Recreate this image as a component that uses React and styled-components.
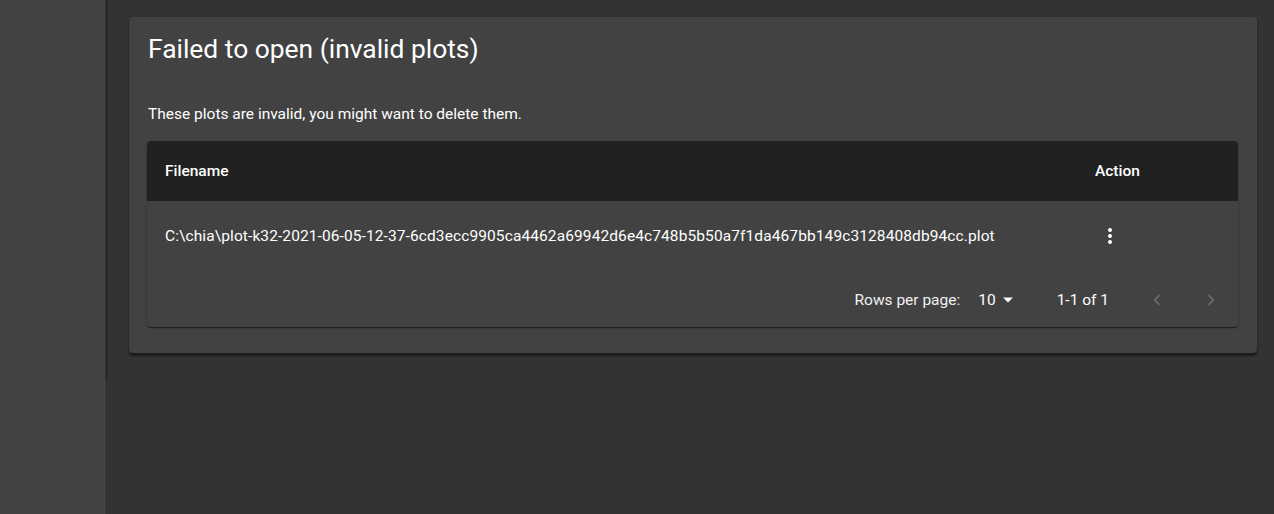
import React from "react";
import styled, { createGlobalStyle } from "styled-components";

const Global = createGlobalStyle`
  html, body, #root { margin: 0; padding: 0; height: 100%; }
  body { background: #333333; font-family: Roboto, "Liberation Sans", Arial, sans-serif; color: #fff; }
  * { box-sizing: border-box; }
`;

const Layout = styled.div`
  display: flex;
  min-height: 100vh;
`;

const Sidebar = styled.aside`
  width: 105px;
  flex: 0 0 105px;
  background: #424242;
  border-right: 1px solid #474747;
`;

const Main = styled.main`
  flex: 1;
  background: #333333;
  display: flex;
  flex-direction: column;
`;

const Content = styled.section`
  height: 378px;
  border-left: 3px solid #2a2a2a;
  padding: 17px 17px 0 21px;
`;

const Card = styled.div`
  background: #424242;
  border-radius: 4px;
  box-shadow: 0 3px 2px rgba(0, 0, 0, 0.4), 0 1px 3px rgba(0, 0, 0, 0.2);
  padding: 15px 19px 26px 18px;
  display: flex;
  flex-direction: column;
`;

const Title = styled.h2`
  margin: 0 0 37px 1px;
  font-size: 26.4px;
  line-height: 34px;
  font-weight: 400;
  color: #fff;
`;

const Subtitle = styled.p`
  margin: 0 0 16px 1px;
  font-size: 15.5px;
  line-height: 22px;
  color: #fff;
`;

const TablePaper = styled.div`
  background: #424242;
  border-radius: 4px;
  box-shadow: 0 2px 1px -1px rgba(0, 0, 0, 0.45), 0 1px 2px rgba(0, 0, 0, 0.3);
  overflow: hidden;
`;

const Row = styled.div`
  display: grid;
  grid-template-columns: 1fr 159px;
  align-items: center;
  height: ${(p) => p.$h}px;
  background: ${(p) => (p.$head ? "#212121" : "transparent")};
`;

const Cell = styled.div`
  padding-left: ${(p) => p.$pl || 18}px;
  font-size: 15.5px;
  line-height: 22px;
  letter-spacing: ${(p) => p.$ls || 0}px;
  font-weight: ${(p) => (p.$head ? 500 : 400)};
  color: #fff;
  white-space: nowrap;
`;

const IconBtn = styled.button`
  width: 24px;
  height: 24px;
  margin-left: 3px;
  padding: 0;
  border: 0;
  background: transparent;
  color: #fff;
  display: flex;
  align-items: center;
  justify-content: center;
`;

const Pagination = styled.div`
  display: flex;
  align-items: center;
  justify-content: flex-end;
  height: 56px;
  padding: 2px 15px 0 0;
  font-size: 15.5px;
  color: #fff;
`;

const Label = styled.span`
  margin-right: 18px;
  color: #f0f0f0;
`;

const Select = styled.span`
  display: inline-flex;
  align-items: center;
  gap: 7px;
  margin-right: 44px;
`;

const Range = styled.span`
  margin-right: 36px;
`;

const NavBtn = styled.span`
  width: 24px;
  height: 24px;
  display: inline-flex;
  align-items: center;
  justify-content: center;
  color: #6b6b6b;
  margin-left: ${(p) => p.$ml || 0}px;
`;

const MoreVert = () => (
  <svg width="24" height="24" viewBox="0 0 24 24" fill="currentColor">
    <circle cx="12" cy="6" r="2" />
    <circle cx="12" cy="12" r="2" />
    <circle cx="12" cy="18" r="2" />
  </svg>
);

const Caret = () => (
  <svg width="10" height="6" viewBox="0 0 10 5" fill="#fff">
    <path d="M0 0l5 5 5-5z" />
  </svg>
);

const Chevron = ({ dir }) => (
  <svg width="22" height="22" viewBox="0 0 24 24" fill="currentColor">
    {dir === "left" ? (
      <path d="M15.41 7.41L14 6l-6 6 6 6 1.41-1.41L10.83 12z" />
    ) : (
      <path d="M10 6L8.59 7.41 13.17 12l-4.58 4.59L10 18l6-6z" />
    )}
  </svg>
);

export default function App() {
  return (
    <>
      <Global />
      <Layout>
        <Sidebar />
        <Main>
          <Content>
            <Card>
              <Title>Failed to open (invalid plots)</Title>
              <Subtitle>These plots are invalid, you might want to delete them.</Subtitle>
              <TablePaper>
                <Row $head $h={60}>
                  <Cell $head>Filename</Cell>
                  <Cell $head $pl={16}>Action</Cell>
                </Row>
                <Row $h={70}>
                  <Cell $ls={0.1}>C:\chia\plot-k32-2021-06-05-12-37-6cd3ecc9905ca4462a69942d6e4c748b5b50a7f1da467bb149c3128408db94cc.plot</Cell>
                  <Cell $pl={16}>
                    <IconBtn aria-label="more">
                      <MoreVert />
                    </IconBtn>
                  </Cell>
                </Row>
                <Pagination>
                  <Label>Rows per page:</Label>
                  <Select>
                    10 <Caret />
                  </Select>
                  <Range>1-1 of 1</Range>
                  <NavBtn><Chevron dir="left" /></NavBtn>
                  <NavBtn $ml={30}><Chevron dir="right" /></NavBtn>
                </Pagination>
              </TablePaper>
            </Card>
          </Content>
        </Main>
      </Layout>
    </>
  );
}
